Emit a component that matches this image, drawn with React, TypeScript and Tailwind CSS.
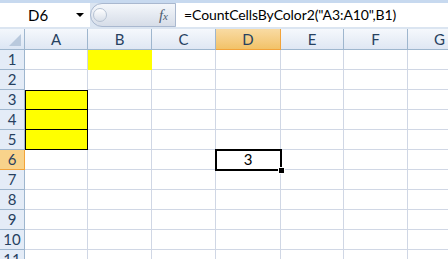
import React from 'react'

const cols = [
  { name: 'A', w: 'w-[63px]' },
  { name: 'B', w: 'w-[64px]' },
  { name: 'C', w: 'w-[64px]' },
  { name: 'D', w: 'w-[65px]' },
  { name: 'E', w: 'w-[63px]' },
  { name: 'F', w: 'w-[64px]' },
  { name: 'G', w: 'w-[64px]' },
]

const rows = [1, 2, 3, 4, 5, 6, 7, 8, 9, 10, 11]

function cellClass(r: number, c: string) {
  if (c === 'B' && r === 1) return 'bg-[#ffff00] border-r border-b border-[#ffff00]'
  if (c === 'A' && r >= 3 && r <= 5)
    return 'bg-[#ffff00] border-r border-b border-black' + (r === 3 ? ' border-t' : '') + ' border-l'
  if (c === 'A' && r === 2) return 'bg-white border-r border-[#d0d7e5]'
  return 'bg-white border-r border-b border-[#d0d7e5]'
}

export default function App() {
  return (
    <div
      className="relative h-[259px] w-[448px] overflow-hidden bg-[#dbe5f1] text-[15px]"
      style={{ fontFamily: 'Lato, "Liberation Sans", sans-serif' }}
    >
      <div className="h-[3px] bg-[#c7d9ef]" />
      {/* formula bar */}
      <div className="flex h-[24px] items-stretch">
        <div className="flex w-[90px] items-center bg-white pl-[28px] text-black">
          <span className="leading-none">D6</span>
          <span className="ml-auto mr-[6px] h-0 w-0 border-x-[4px] border-t-[4px] border-x-transparent border-t-black" />
        </div>
        <div className="flex w-[86px] items-center rounded-l-full border border-[#a9b8cf] bg-gradient-to-b from-[#f4f7fb] to-[#d6dde8]">
          <div className="ml-[2px] h-[14px] w-[14px] rounded-full border border-[#b7c3d3] bg-gradient-to-b from-[#ffffff] to-[#d8dfe9]" />
          <span
            className="ml-auto mr-[7px] text-[15px] italic text-[#4f5d70]"
            style={{ fontFamily: '"Liberation Serif", serif' }}
          >
            f<span className="text-[11px]">x</span>
          </span>
        </div>
        <div className="flex flex-1 items-center bg-white pl-[8px] text-black">
          <span className="whitespace-nowrap text-[14px] leading-none tracking-[-0.1px]">=CountCellsByColor2("A3:A10",B1)</span>
        </div>
      </div>
      <div className="h-[2px]" />
      {/* column headers */}
      <div className="flex h-[21px]">
        <div className="relative w-[25px] shrink-0 border-r border-b border-[#9eb6ce] bg-gradient-to-b from-[#f3f7fc] to-[#dce6f4]">
          <div className="absolute bottom-[3px] right-[3px] h-0 w-0 border-b-[12px] border-l-[12px] border-b-[#b9c9dd] border-l-transparent" />
        </div>
        {cols.map((c) => (
          <div
            key={c.name}
            className={
              c.w +
              ' flex shrink-0 items-center justify-center border-r border-b ' +
              (c.name === 'D'
                ? 'border-[#f2a33a] bg-gradient-to-b from-[#f9dba3] to-[#f2c267]'
                : 'border-[#9eb6ce] bg-gradient-to-b from-[#f5f8fc] to-[#dfe7f3]') +
              ' text-[#27415f]'
            }
          >
            {c.name}
          </div>
        ))}
      </div>
      {/* rows */}
      {rows.map((r) => (
        <div key={r} className="flex h-[20px]">
          <div
            className={
              'flex w-[25px] shrink-0 items-center justify-center border-r border-b text-[#27415f] ' +
              (r === 6 ? 'border-[#f2a33a] bg-[#f8d38b]' : 'border-[#9eb6ce] bg-[#e4ecf7]')
            }
          >
            {r}
          </div>
          {cols.map((c) => (
            <div
              key={c.name}
              className={c.w + ' shrink-0 flex items-center justify-center text-black ' + cellClass(r, c.name)}
            >
              {c.name === 'D' && r === 6 ? '3' : ''}
            </div>
          ))}
        </div>
      ))}
      {/* active cell D6 */}
      <div className="absolute left-[215px] top-[149px] h-[22px] w-[67px] border-[2px] border-black" />
      <div className="absolute left-[278px] top-[167px] h-[7px] w-[7px] border border-white bg-black" />
    </div>
  )
}
